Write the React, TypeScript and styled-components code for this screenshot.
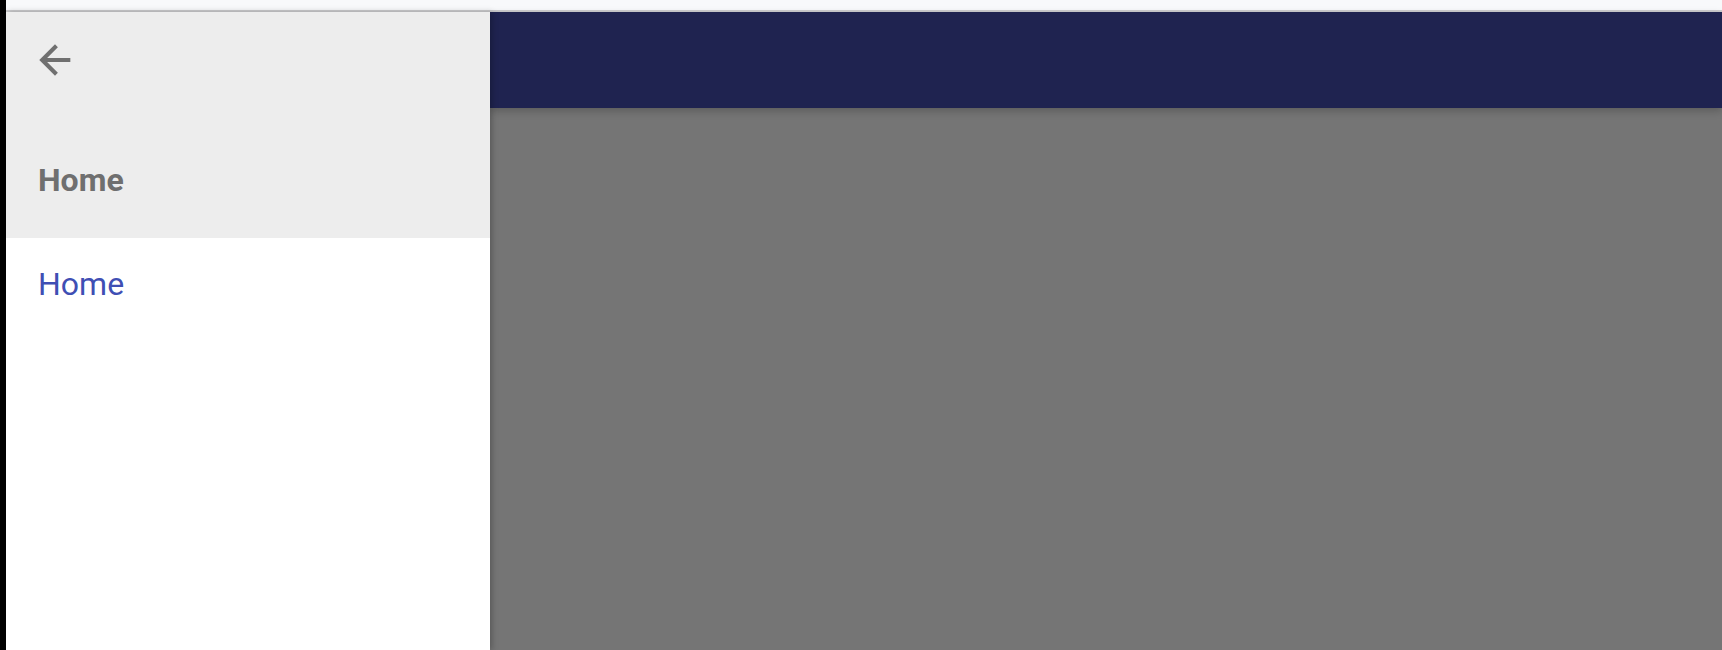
import React from "react";
import styled, { createGlobalStyle } from "styled-components";

const Global = createGlobalStyle`
  html, body { margin: 0; padding: 0; height: 100%; overflow: hidden; }
  body { background: #f8f9fb; font-family: Roboto, "Liberation Sans", sans-serif; }
  #root { height: 100%; }
`;

const Page = styled.div`
  display: flex;
  height: 650px;
`;

const EdgeBar = styled.div`
  width: 6px;
  flex: none;
  background: #000;
`;

const Column = styled.div`
  flex: 1;
  display: flex;
  flex-direction: column;
  min-width: 0;
`;

const TopStrip = styled.div`
  height: 10px;
  flex: none;
  background: #f8f9fb;
  border-bottom: 2px solid #cdcdcf;
`;

const Stage = styled.div`
  flex: 1;
  display: flex;
  min-height: 0;
`;

const Drawer = styled.nav`
  width: 484px;
  flex: none;
  background: #fff;
  display: flex;
  flex-direction: column;
  position: relative;
  z-index: 2;
  box-shadow: 2px 0 6px rgba(0, 0, 0, 0.25);
`;

const DrawerHeader = styled.header`
  background: #ededed;
  height: 226px;
  box-sizing: border-box;
  padding: 25px 0 0 0;
  display: flex;
  flex-direction: column;
`;

const BackButton = styled.button`
  width: 46px;
  height: 46px;
  margin-left: 26px;
  padding: 0;
  border: 0;
  background: none;
  color: #707070;
  display: flex;
  cursor: pointer;
`;

const HeaderTitle = styled.h1`
  margin: 77px 0 0 32px;
  font-family: Roboto, "Liberation Sans", sans-serif;
  font-size: 32px;
  line-height: 40px;
  font-weight: 700;
  color: #6f6f6f;
`;

const NavList = styled.ul`
  list-style: none;
  margin: 0;
  padding: 26px 0 0 0;
`;

const NavItem = styled.li<{ $active?: boolean }>`
  padding-left: 32px;
  font-size: 32px;
  line-height: 41px;
  font-weight: 400;
  color: ${(p) => (p.$active ? "#3f4fb4" : "#333")};
`;

const Main = styled.main`
  flex: 1;
  display: flex;
  flex-direction: column;
  background: #757575;
  min-width: 0;
`;

const Toolbar = styled.div`
  height: 96px;
  flex: none;
  background: #1f2350;
  position: relative;
  z-index: 1;
  box-shadow: 0 3px 8px rgba(0, 0, 0, 0.22);
`;

const Content = styled.div`
  flex: 1;
  background: #757575;
`;

const ArrowBack = () => (
  <svg width="46" height="46" viewBox="0 0 24 24" fill="currentColor" aria-hidden="true">
    <path d="M20 10.9H7.9l5.6-5.6L12 3.8l-8.2 8.2 8.2 8.2 1.5-1.5-5.6-5.6H20v-2.2z" />
  </svg>
);

export default function App() {
  return (
    <>
      <Global />
      <Page>
        <EdgeBar />
        <Column>
          <TopStrip />
          <Stage>
            <Drawer>
              <DrawerHeader>
                <BackButton aria-label="Back">
                  <ArrowBack />
                </BackButton>
                <HeaderTitle>Home</HeaderTitle>
              </DrawerHeader>
              <NavList>
                <NavItem $active>Home</NavItem>
              </NavList>
            </Drawer>
            <Main>
              <Toolbar />
              <Content />
            </Main>
          </Stage>
        </Column>
      </Page>
    </>
  );
}
